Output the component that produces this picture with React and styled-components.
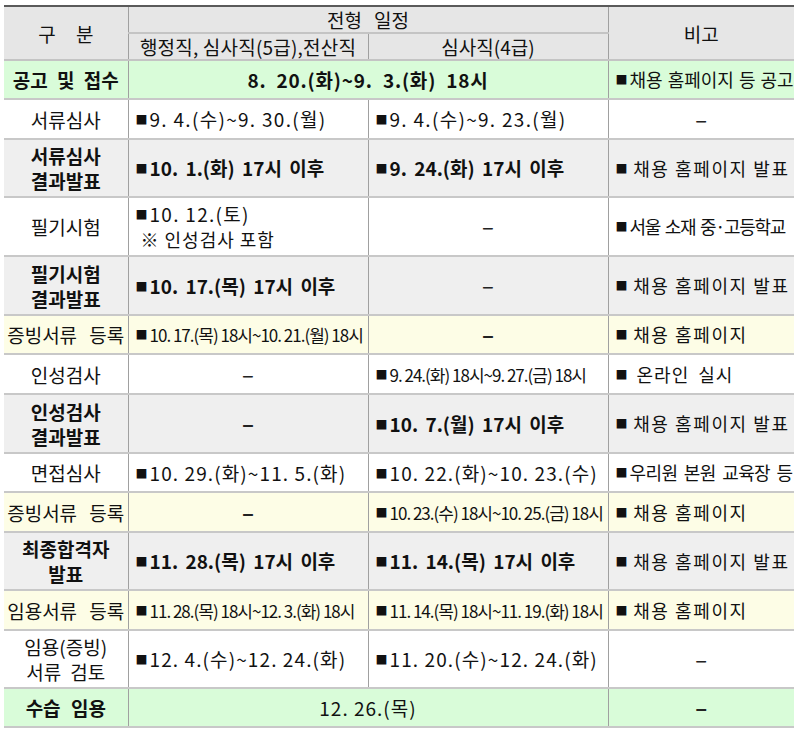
import React from 'react';
import styled, { createGlobalStyle } from 'styled-components';

const Global = createGlobalStyle`
  html, body { margin: 0; padding: 0; background: #fff; }
  body { font-family: "Noto Sans CJK KR", "Noto Sans", sans-serif; color: #111; }
`;

const Page = styled.div`
  padding: 5px 6px 0 4px;
`;

const Table = styled.table`
  border-collapse: collapse;
  table-layout: fixed;
  width: 790px;
  border-top: 2px solid #5a5a5a;
  border-bottom: 2px solid #6a6a6a;
  font-size: 19px;
  line-height: 25px;
`;

const tones = {
  head: '#e6e6e6',
  green: '#d9fcd9',
  gray: '#efefef',
  yellow: '#fdfde6',
  white: '#ffffff',
};

const Row = styled.tr`
  background: ${(p) => tones[p.$tone || 'white']};
  height: ${(p) => p.$h}px;
`;

const HeadCell = styled.th`
  font-weight: 400;
  padding: 0 4px;
  text-align: center;
  vertical-align: middle;
  border-left: 1px solid #a0a0a0;
  border-right: 1px solid #a0a0a0;
  border-top: 1px solid #7a7a7a;
  border-bottom: 2px solid #c4c4c4;
  letter-spacing: ${(p) => p.$ls || 0}px;
  word-spacing: ${(p) => p.$ws || 0}px;
  white-space: nowrap;
  &:first-child { border-left: none; }
  &:last-child { border-right: none; }
`;

const Cell = styled.td`
  font-weight: ${(p) => (p.$bold ? 700 : 400)};
  padding: 0 0 0 ${(p) => (p.$align === 'left' ? p.$pl ?? 7 : 0)}px;
  text-align: ${(p) => p.$align || 'center'};
  vertical-align: middle;
  white-space: nowrap;
  overflow: hidden;
  border-left: 1px solid #a0a0a0;
  border-right: 1px solid #a0a0a0;
  border-top: 2px solid #c8c8c8;
  border-bottom: 2px solid #c8c8c8;
  letter-spacing: ${(p) => p.$ls || 0}px;
  word-spacing: ${(p) => p.$ws || 0}px;
  font-size: ${(p) => p.$fs || 19}px;
  &:first-child { border-left: none; }
  &:last-child { border-right: none; }
`;

const Bullet = styled.span`
  font-size: 12px;
  letter-spacing: 0;
  margin-right: ${(p) => p.$gap ?? 2}px;
  vertical-align: 2px;
  font-weight: 400;
`;

const Note = styled.div`
  padding-left: 5px;
  font-size: 18px;
  letter-spacing: 1px;
`;

const DashMark = styled.span`
  font-size: 22px;
  line-height: 1;
  font-weight: ${(p) => (p.$bold ? 700 : 400)};
  color: #222;
`;

const Dash = ({ bold }) => <DashMark $bold={bold}>–</DashMark>;

const B = ({ gap }) => <Bullet $gap={gap}>■</Bullet>;

export default function App() {
  return (
    <>
      <Global />
      <Page>
        <Table>
          <colgroup>
            <col style={{ width: 124 }} />
            <col style={{ width: 240 }} />
            <col style={{ width: 240 }} />
            <col style={{ width: 186 }} />
          </colgroup>
          <thead>
            <Row $tone="head" $h={25}>
              <HeadCell rowSpan={2} $ws={16}>구 분</HeadCell>
              <HeadCell colSpan={2} $ws={8}>전형 일정</HeadCell>
              <HeadCell rowSpan={2}>비고</HeadCell>
            </Row>
            <Row $tone="head" $h={26}>
              <HeadCell $ls={0.2}>행정직, 심사직(5급),전산직</HeadCell>
              <HeadCell>심사직(4급)</HeadCell>
            </Row>
          </thead>
          <tbody>
            <Row $tone="green" $h={39}>
              <Cell $bold $ws={5}>공고 및 접수</Cell>
              <Cell colSpan={2} $bold $ws={5} $ls={0.8}>8. 20.(화)~9. 3.(화) 18시</Cell>
              <Cell $align="left" $fs={18} $ws={1}><B />채용 홈페이지 등 공고</Cell>
            </Row>
            <Row $h={40}>
              <Cell>서류심사</Cell>
              <Cell $align="left" $ls={1.3}><B />9. 4.(수)~9. 30.(월)</Cell>
              <Cell $align="left" $ls={1.3}><B />9. 4.(수)~9. 23.(월)</Cell>
              <Cell><Dash /></Cell>
            </Row>
            <Row $tone="gray" $h={58}>
              <Cell $bold>서류심사<br />결과발표</Cell>
              <Cell $align="left" $bold $ws={3}><B />10. 1.(화) 17시 이후</Cell>
              <Cell $align="left" $bold $ws={3}><B />9. 24.(화) 17시 이후</Cell>
              <Cell $align="left" $fs={18} $ls={1.6}><B gap={0} /> 채용 홈페이지 발표</Cell>
            </Row>
            <Row $h={59}>
              <Cell>필기시험</Cell>
              <Cell $align="left" $ls={1.3}>
                <B />10. 12.(토)
                <Note>※ 인성검사 포함</Note>
              </Cell>
              <Cell><Dash /></Cell>
              <Cell $align="left" $fs={18} $ls={-1.3} $ws={2}><B />서울 소재 중·고등학교</Cell>
            </Row>
            <Row $tone="gray" $h={59}>
              <Cell $bold>필기시험<br />결과발표</Cell>
              <Cell $align="left" $bold $ws={3}><B />10. 17.(목) 17시 이후</Cell>
              <Cell><Dash /></Cell>
              <Cell $align="left" $fs={18} $ls={1.6}><B gap={0} /> 채용 홈페이지 발표</Cell>
            </Row>
            <Row $tone="yellow" $h={39}>
              <Cell $ws={8}>증빙서류 등록</Cell>
              <Cell $align="left" $ls={-1} $fs={17}><B />10. 17.(목) 18시~10. 21.(월) 18시</Cell>
              <Cell><Dash bold /></Cell>
              <Cell $align="left" $fs={18} $ls={1.6}><B gap={0} /> 채용 홈페이지</Cell>
            </Row>
            <Row $h={40}>
              <Cell>인성검사</Cell>
              <Cell><Dash /></Cell>
              <Cell $align="left" $ls={-1} $fs={17}><B />9. 24.(화) 18시~9. 27.(금) 18시</Cell>
              <Cell $align="left" $fs={18} $ls={1} $ws={4}><B gap={0} /> 온라인 실시</Cell>
            </Row>
            <Row $tone="gray" $h={59}>
              <Cell $bold>인성검사<br />결과발표</Cell>
              <Cell><Dash bold /></Cell>
              <Cell $align="left" $bold $ws={3}><B />10. 7.(월) 17시 이후</Cell>
              <Cell $align="left" $fs={18} $ls={1.6}><B gap={0} /> 채용 홈페이지 발표</Cell>
            </Row>
            <Row $h={39}>
              <Cell>면접심사</Cell>
              <Cell $align="left" $ls={1.1}><B />10. 29.(화)~11. 5.(화)</Cell>
              <Cell $align="left" $ls={1.1}><B />10. 22.(화)~10. 23.(수)</Cell>
              <Cell $align="left" $fs={18} $ls={-0.6} $ws={3}><B />우리원 본원 교육장 등</Cell>
            </Row>
            <Row $tone="yellow" $h={40}>
              <Cell $ws={8}>증빙서류 등록</Cell>
              <Cell><Dash bold /></Cell>
              <Cell $align="left" $ls={-1} $fs={17}><B />10. 23.(수) 18시~10. 25.(금) 18시</Cell>
              <Cell $align="left" $fs={18} $ls={1.6}><B gap={0} /> 채용 홈페이지</Cell>
            </Row>
            <Row $tone="gray" $h={58}>
              <Cell $bold>최종합격자<br />발표</Cell>
              <Cell $align="left" $bold $ws={3}><B />11. 28.(목) 17시 이후</Cell>
              <Cell $align="left" $bold $ws={3}><B />11. 14.(목) 17시 이후</Cell>
              <Cell $align="left" $fs={18} $ls={1.6}><B gap={0} /> 채용 홈페이지 발표</Cell>
            </Row>
            <Row $tone="yellow" $h={40}>
              <Cell $ws={8}>임용서류 등록</Cell>
              <Cell $align="left" $ls={-1} $fs={17}><B />11. 28.(목) 18시~12. 3.(화) 18시</Cell>
              <Cell $align="left" $ls={-1} $fs={17}><B />11. 14.(목) 18시~11. 19.(화) 18시</Cell>
              <Cell $align="left" $fs={18} $ls={1.6}><B gap={0} /> 채용 홈페이지</Cell>
            </Row>
            <Row $h={58}>
              <Cell $ws={5}>임용(증빙)<br />서류 검토</Cell>
              <Cell $align="left" $ls={1.1}><B />12. 4.(수)~12. 24.(화)</Cell>
              <Cell $align="left" $ls={1.1}><B />11. 20.(수)~12. 24.(화)</Cell>
              <Cell><Dash /></Cell>
            </Row>
            <Row $tone="green" $h={39}>
              <Cell $bold $ws={6}>수습 임용</Cell>
              <Cell colSpan={2} $ls={1}>12. 26.(목)</Cell>
              <Cell><Dash bold /></Cell>
            </Row>
          </tbody>
        </Table>
      </Page>
    </>
  );
}
